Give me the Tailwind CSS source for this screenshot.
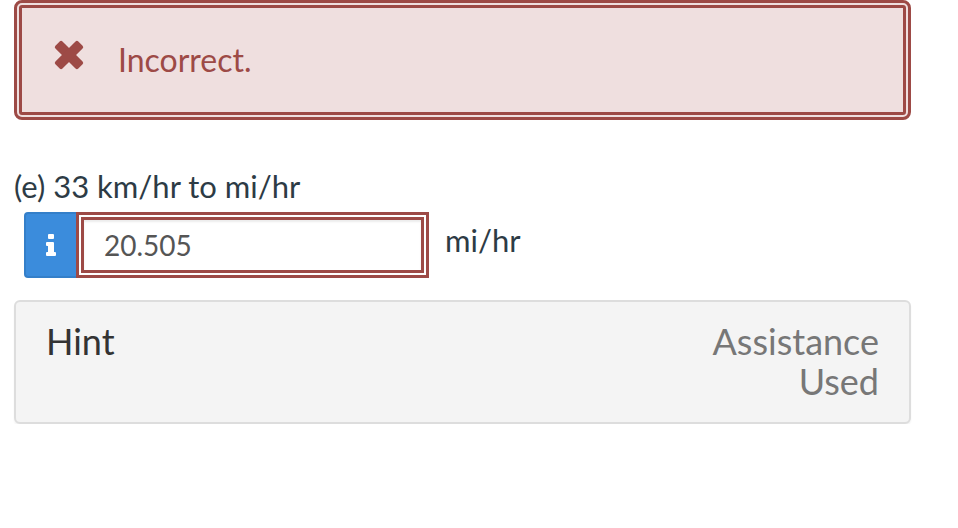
<!DOCTYPE html>
<html lang="en">
<head>
    <meta charset="UTF-8">
    <meta name="viewport" content="width=device-width, initial-scale=1.0">
    <title>Unit Conversion</title>
    <script src="https://cdn.jsdelivr.net/npm/@tailwindcss/browser@4"></script>
</head>
<body class="bg-white font-['Lato',sans-serif] text-[31px] leading-10 text-[#2d3b45]">
    <main class="pl-[14px] pr-[47px]">
        <!-- Result message -->
        <div role="alert" class="flex items-start rounded-lg border-8 border-double border-[#9d4a46] bg-[#efdfdf] p-8 text-[32px] text-[#9d4a46]">
            <svg class="h-[30px] w-[30px] shrink-0" viewBox="0 0 30 30" fill="currentColor" aria-hidden="true">
                <rect x="-1.200" y="10" width="32.400" height="10" rx="2" transform="rotate(45 15 15)"/>
                <rect x="-1.200" y="10" width="32.400" height="10" rx="2" transform="rotate(-45 15 15)"/>
            </svg>
            <p class="ml-[34px]">Incorrect.</p>
        </div>

        <!-- Question part -->
        <label for="answer" class="mt-[46px] block">(e) 33 km/hr to mi/hr</label>
        <div class="mt-[6px] flex items-start pl-[10px]">
            <button type="button" aria-label="Answer information" class="flex h-[66px] w-[52px] shrink-0 items-center justify-center rounded-l border-2 border-r-0 border-[#347fc9] bg-[#3b8cdc] text-white">
                <svg class="h-[22px] w-[10px]" viewBox="0 0 10 22" fill="currentColor" aria-hidden="true">
                    <rect x="2" width="6" height="5" rx="1"/>
                    <path d="M1 8 H7 Q8 8 8 9 V18 H9 Q10 18 10 19 V21 Q10 22 9 22 H1 Q0 22 0 21 V19 Q0 18 1 18 H2 V12 H1 Q0 12 0 11 V9 Q0 8 1 8 Z"/>
                </svg>
            </button>
            <input id="answer" type="text" value="20.505" class="h-[66px] w-[353px] min-w-0 border-8 border-double border-[#9d4a46] bg-white px-5 text-[28px] text-[#555555] shadow-[inset_0_2px_2px_rgba(0,0,0,0.075)]">
            <span class="ml-4 mt-2">mi/hr</span>
        </div>

        <!-- Hint panel -->
        <section class="mt-[22px] flex items-start justify-between rounded-md border-2 border-[#dddddd] bg-[#f4f4f4] px-[30px] pt-[19px] pb-[21px] text-4xl leading-10 shadow-[0_2px_2px_rgba(0,0,0,0.05)]">
            <h2 class="text-[#333333]">Hint</h2>
            <p class="w-1/4 text-right text-[#777777]">Assistance Used</p>
        </section>
    </main>
</body>
</html>
